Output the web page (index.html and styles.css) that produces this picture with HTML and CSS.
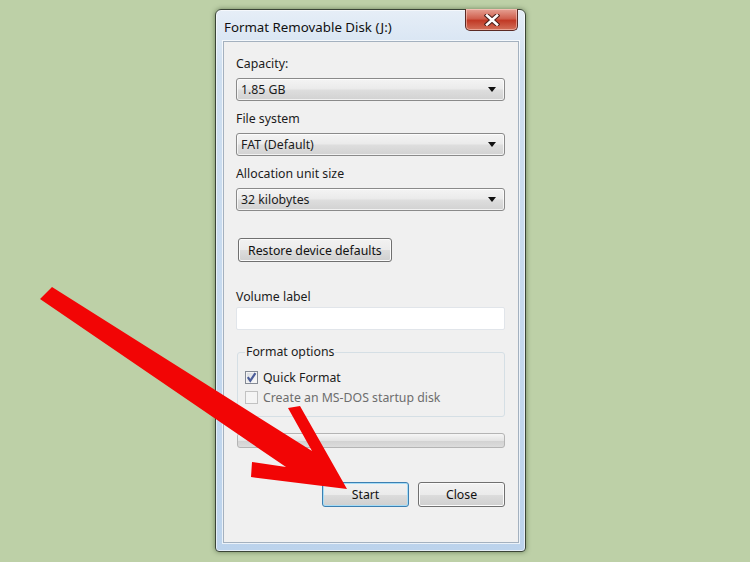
FILE: index.html
```html
<!DOCTYPE html>
<html lang="en">
<head>
    <meta charset="UTF-8">
    <meta name="viewport" content="width=device-width, initial-scale=1.0">
    <title>Format Removable Disk (J:)</title>
    <link rel="stylesheet" href="styles.css">
</head>
<body>
    <!-- Format dialog -->
    <div class="window">
        <div class="titlebar">
            <span class="title">Format Removable Disk (J:)</span>
            <span class="close-x">
                <svg width="16" height="12" viewBox="0 0 16 12">
                    <path d="M3 1.5 L13 10.5 M13 1.5 L3 10.5" stroke="#4a1f1a" stroke-width="4.6" stroke-linecap="square"/>
                    <path d="M3 1.5 L13 10.5 M13 1.5 L3 10.5" stroke="#fff" stroke-width="2.6" stroke-linecap="square"/>
                </svg>
            </span>
        </div>

        <div class="client">
            <div class="label">Capacity:</div>
            <div class="combo"><span>1.85 GB</span><i class="caret"></i></div>

            <div class="label">File system</div>
            <div class="combo"><span>FAT (Default)</span><i class="caret"></i></div>

            <div class="label">Allocation unit size</div>
            <div class="combo"><span>32 kilobytes</span><i class="caret"></i></div>

            <button class="btn restore">Restore device defaults</button>

            <div class="label volume">Volume label</div>
            <div class="textbox"></div>

            <fieldset class="options">
                <legend>Format options</legend>
                <div class="check-row">
                    <span class="checkbox">
                        <svg width="11" height="11" viewBox="0 0 11 11">
                            <path d="M1.8 5.2 L4.3 8.8 L9.4 1.2" fill="none" stroke="#4b5d9a" stroke-width="2.2"/>
                        </svg>
                    </span>
                    <span>Quick Format</span>
                </div>
                <div class="check-row disabled">
                    <span class="checkbox"></span>
                    <span>Create an MS-DOS startup disk</span>
                </div>
            </fieldset>

            <div class="progress"></div>

            <div class="actions">
                <button class="btn default">Start</button>
                <button class="btn">Close</button>
            </div>
        </div>
    </div>

    <!-- Red pointer arrow -->
    <svg class="arrow" width="750" height="562" viewBox="0 0 750 562">
        <polygon points="52,287 312,451 288,408 300,406 347,489 251,477 252,462 286,467 40,299" fill="#f20505"/>
    </svg>
</body>
</html>
```

FILE: styles.css
```css
body {
    margin: 0;
    height: 562px;
    overflow: hidden;
    background-color: #bdd0a7;
    font-family: "Noto Sans", "Open Sans", sans-serif;
    font-size: 12.3px;
    color: #1b1b1b;
}

/* Window frame */
.window {
    margin: 9px 0 0 215px;
    width: 311px;
    height: 543px;
    box-sizing: border-box;
    border: 1px solid #3a4536;
    border-radius: 6px 6px 4px 4px;
    background: linear-gradient(#e6eef7, #cfdff0 60px, #bcd3ec);
    box-shadow: 0 0 5px rgba(40, 60, 30, 0.55), inset 0 0 0 1px rgba(255, 255, 255, 0.6);
    padding: 0 6px 8px 7px;
    display: flex;
    flex-direction: column;
}

.titlebar {
    height: 31px;
    display: flex;
    justify-content: space-between;
    align-items: flex-start;
}

.title {
    margin: 8px 0 0 1px;
    font-size: 13.3px;
    line-height: 18px;
    color: #111;
}

.close-x {
    width: 53px;
    height: 22px;
    margin: -1px 1px 0 0;
    box-sizing: border-box;
    border: 1px solid #5b2a24;
    border-top: none;
    border-radius: 0 0 5px 5px;
    background: linear-gradient(#e6a294, #d0614f 45%, #c13a26 55%, #d3705a);
    box-shadow: inset 0 0 0 1px rgba(255, 220, 210, 0.5);
    display: flex;
    align-items: center;
    justify-content: center;
}

/* Client area */
.client {
    flex: 1;
    background-color: #f0f0f0;
    border: 1px solid #a4b1bf;
    box-shadow: 0 0 0 1px rgba(255, 255, 255, 0.7);
    padding: 14px 13px 0 12px;
    display: flex;
    flex-direction: column;
}

.label {
    line-height: 16px;
    margin-bottom: 6px;
}

.combo {
    height: 23px;
    box-sizing: border-box;
    border: 1px solid #8a8a8a;
    border-radius: 3px;
    background: linear-gradient(#f4f4f4, #ebebeb 45%, #dddddd 55%, #d2d2d2);
    box-shadow: inset 0 0 0 1px rgba(255, 255, 255, 0.7);
    padding: 0 8px 0 4px;
    margin-bottom: 10px;
    display: flex;
    align-items: center;
    justify-content: space-between;
}

.caret {
    width: 0;
    height: 0;
    border-left: 4px solid transparent;
    border-right: 4px solid transparent;
    border-top: 5px solid #111;
}

.btn {
    height: 25px;
    width: 87px;
    box-sizing: border-box;
    border: 1px solid #707070;
    border-radius: 3px;
    background: linear-gradient(#f2f2f2, #ebebeb 50%, #dddddd 50%, #cfcfcf);
    box-shadow: inset 0 0 0 1px #fbfbfb;
    font: inherit;
    color: #111;
    padding: 0;
}

.btn.restore {
    align-self: flex-start;
    width: auto;
    height: 24px;
    padding: 0 9px;
    margin: 17px 0 0 2px;
}

.btn.default {
    border-color: #3c7fb1;
    box-shadow: inset 0 0 0 1px #a6dcf6;
}

.label.volume {
    margin: 27px 0 2px;
}

.textbox {
    height: 23px;
    box-sizing: border-box;
    background-color: #fff;
    border: 1px solid #e1e5ea;
    border-radius: 2px;
}

/* Format options group */
.options {
    margin: 14px 0 0 1px;
    padding: 7px 0 9px 7px;
    border: 1px solid #d5dfe5;
    border-radius: 3px;
    min-width: 0;
}

.options legend {
    padding: 0 1px;
    line-height: 16px;
}

.check-row {
    height: 20px;
    display: flex;
    align-items: center;
    gap: 5px;
}

.checkbox {
    width: 13px;
    height: 13px;
    box-sizing: border-box;
    border: 1px solid #848a94;
    background: linear-gradient(135deg, #d8dbe0, #fbfbfb);
    box-shadow: inset 0 0 0 1px #f4f4f4;
    display: flex;
    align-items: center;
    justify-content: center;
}

.check-row.disabled {
    color: #6d6d6d;
}

.check-row.disabled .checkbox {
    border-color: #c2c2c2;
    background: #f4f4f4;
}

.progress {
    margin: 16px 0 0 1px;
    height: 15px;
    box-sizing: border-box;
    border: 1px solid #b4b4b4;
    border-radius: 3px;
    background: linear-gradient(#f6f6f6, #e4e4e4 50%, #d2d2d2 55%, #dcdcdc);
}

.actions {
    margin-top: 34px;
    display: flex;
    justify-content: flex-end;
    gap: 9px;
}

/* Overlay arrow */
.arrow {
    position: absolute;
    top: 0;
    left: 0;
    pointer-events: none;
}
```
